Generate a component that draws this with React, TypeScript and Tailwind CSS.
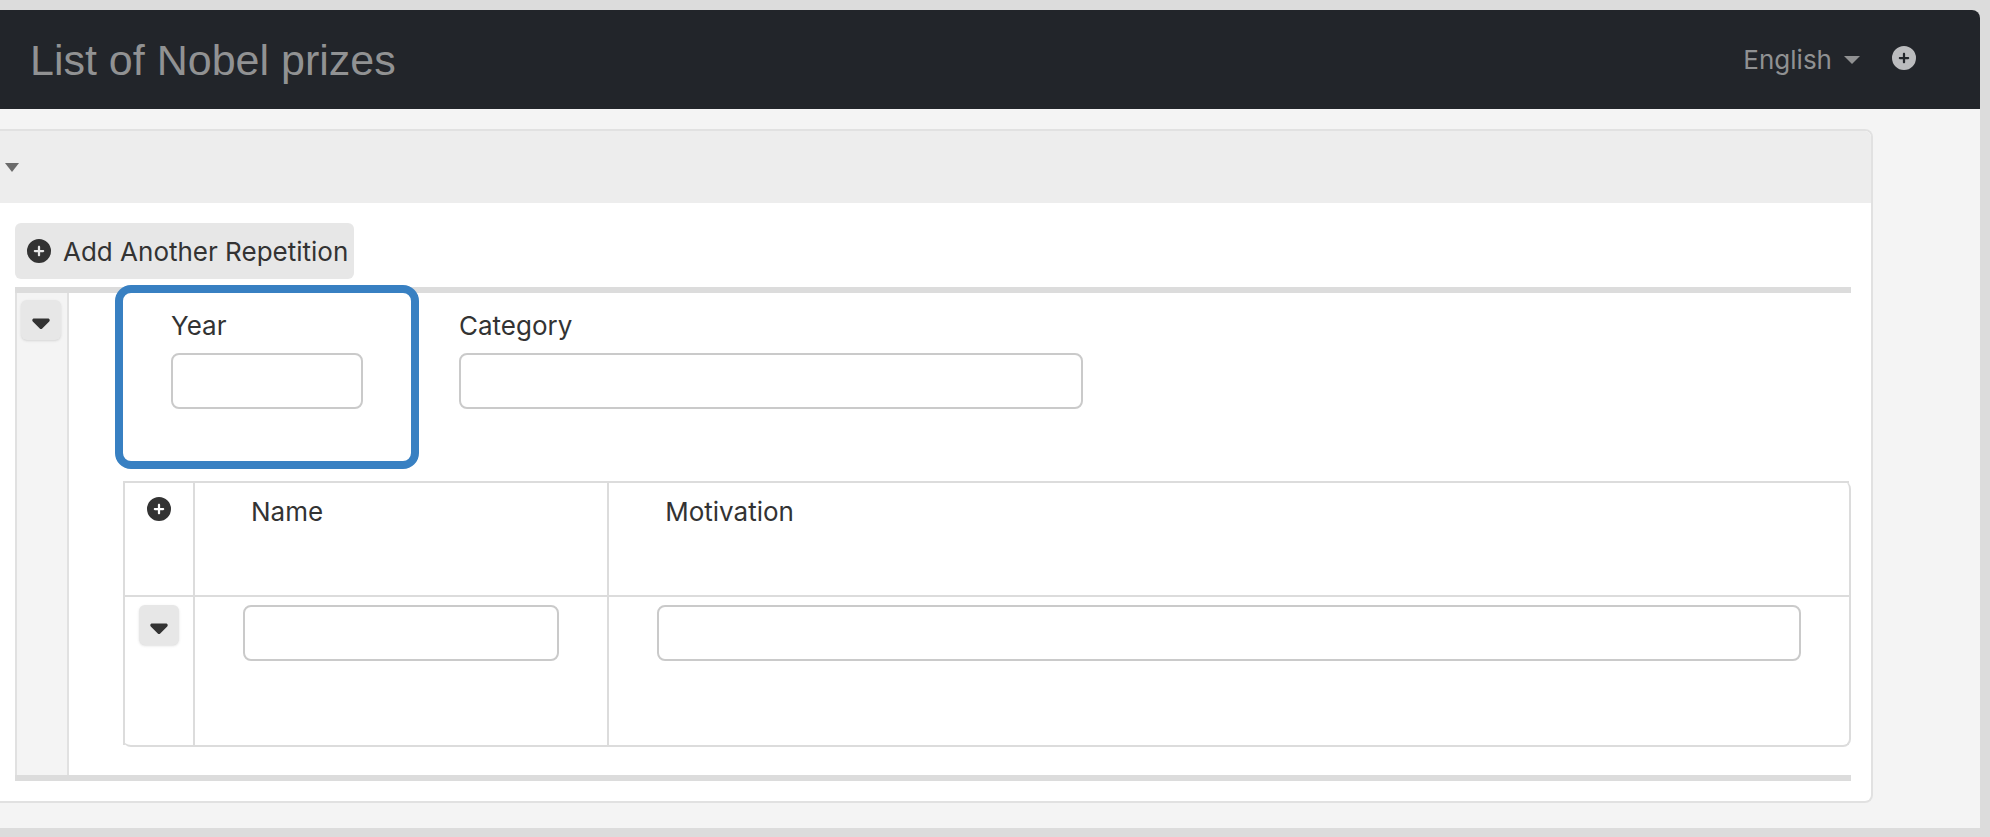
import { FaCaretDown, FaCirclePlus } from 'react-icons/fa6';

interface TextFieldProps {
  id: string;
  label: string;
}

const INPUT_CLASSES =
  'block h-14 w-full rounded-lg border-2 border-[#cacaca] bg-white px-3 text-[26px] text-[#333] outline-none';

function TextField({ id, label }: TextFieldProps) {
  return (
    <>
      <label htmlFor={id} className="mb-[7px] block leading-10">
        {label}
      </label>
      <input id={id} type="text" className={INPUT_CLASSES} />
    </>
  );
}

function MenuButton({ label }: { label: string }) {
  return (
    <button
      type="button"
      aria-label={label}
      aria-haspopup="menu"
      className="flex size-10 items-center justify-center rounded-md bg-[#e7e7e7] pt-1 shadow-sm"
    >
      <FaCaretDown className="size-7" />
    </button>
  );
}

function Navbar() {
  return (
    <header className="flex h-[99px] items-center justify-between rounded-tr-lg bg-[#22252a] pr-16 pl-[30px]">
      <h1 className="font-['Liberation_Sans',sans-serif] text-[43px] leading-[60px] text-[#919293]">
        List of Nobel prizes
      </h1>
      <nav className="flex items-center gap-8 text-[#909192]">
        <button type="button" aria-haspopup="menu" className="flex items-center gap-3 leading-10">
          English
          <svg viewBox="0 0 16 8" className="h-2 w-4" fill="currentColor" aria-hidden="true">
            <path d="M0 0h16L8 8z" />
          </svg>
        </button>
        <button type="button" aria-label="New" className="pb-1 text-[#bbbcbe]">
          <FaCirclePlus className="size-6" />
        </button>
      </nav>
    </header>
  );
}

function LaureatesTable() {
  return (
    <table className="mt-5 w-full table-fixed border-separate border-spacing-0 rounded-lg border-r-2 border-b-2 border-[#dcdcdc]">
      <colgroup>
        <col className="w-[70px]" />
        <col className="w-[24%]" />
        <col />
      </colgroup>
      <thead>
        <tr className="h-[114px] align-top">
          <th className="border-t-2 border-l-2 border-[#dcdcdc] pt-[14px]">
            <button type="button" aria-label="Add laureate" className="mx-auto block">
              <FaCirclePlus className="size-6" />
            </button>
          </th>
          <th className="border-t-2 border-l-2 border-[#dcdcdc] px-14 pt-[9px] text-left leading-10 font-normal">
            Name
          </th>
          <th className="border-t-2 border-l-2 border-[#dcdcdc] px-14 pt-[9px] text-left leading-10 font-normal">
            Motivation
          </th>
        </tr>
      </thead>
      <tbody>
        <tr className="h-[150px] align-top">
          <td className="border-t-2 border-l-2 border-[#dcdcdc] px-[14px] pt-2">
            <MenuButton label="Laureate actions" />
          </td>
          <td className="border-t-2 border-l-2 border-[#dcdcdc] px-12 pt-2">
            <input type="text" aria-label="Name" className={INPUT_CLASSES} />
          </td>
          <td className="border-t-2 border-l-2 border-[#dcdcdc] px-12 pt-2">
            <input type="text" aria-label="Motivation" className={INPUT_CLASSES} />
          </td>
        </tr>
      </tbody>
    </table>
  );
}

export default function App() {
  return (
    <div className="min-h-screen bg-[#dcdcdc] pt-[10px] pr-[10px] pb-[9px] font-['Inter',sans-serif] text-[26px] text-[#333]">
      <div className="flow-root rounded-tr-lg bg-[#f4f4f4]">
        <Navbar />

        <main className="mt-5 mr-[107px] mb-[25px] overflow-hidden rounded-r-lg border-2 border-l-0 border-[#e1e1e1] bg-white">
          <div className="flex h-[72px] items-center bg-[#ededed] pl-[5px]">
            <button type="button" aria-label="Toggle section" className="text-[#6b6b6b]">
              <svg viewBox="0 0 14 9" className="h-[9px] w-[14px]" fill="currentColor" aria-hidden="true">
                <path d="M0 0h14L7 9z" />
              </svg>
            </button>
          </div>

          <div className="py-5 pr-5 pl-[15px]">
            <button
              type="button"
              className="flex h-14 items-center gap-3 rounded-md bg-[#e7e7e7] pr-[6px] pl-3"
            >
              <FaCirclePlus className="size-6" />
              Add Another Repetition
            </button>

            <div className="mt-2 flex border-y-6 border-[#dcdcdc]">
              <div className="w-[54px] shrink-0 border-x-2 border-[#e1e1e1] bg-[#f4f4f4] px-1 pt-[7px]">
                <MenuButton label="Repetition actions" />
              </div>

              <div className="min-w-0 grow pb-7 pl-[54px]">
                <div className="grid h-[168px] grid-cols-12">
                  {/* Current field */}
                  <div className="col-span-2 rounded-lg px-12 pt-[13px] outline-8 outline-[#3880c2]">
                    <TextField id="year" label="Year" />
                  </div>
                  <div className="col-span-5 px-12 pt-[13px]">
                    <TextField id="category" label="Category" />
                  </div>
                </div>

                <LaureatesTable />
              </div>
            </div>
          </div>
        </main>
      </div>
    </div>
  );
}
